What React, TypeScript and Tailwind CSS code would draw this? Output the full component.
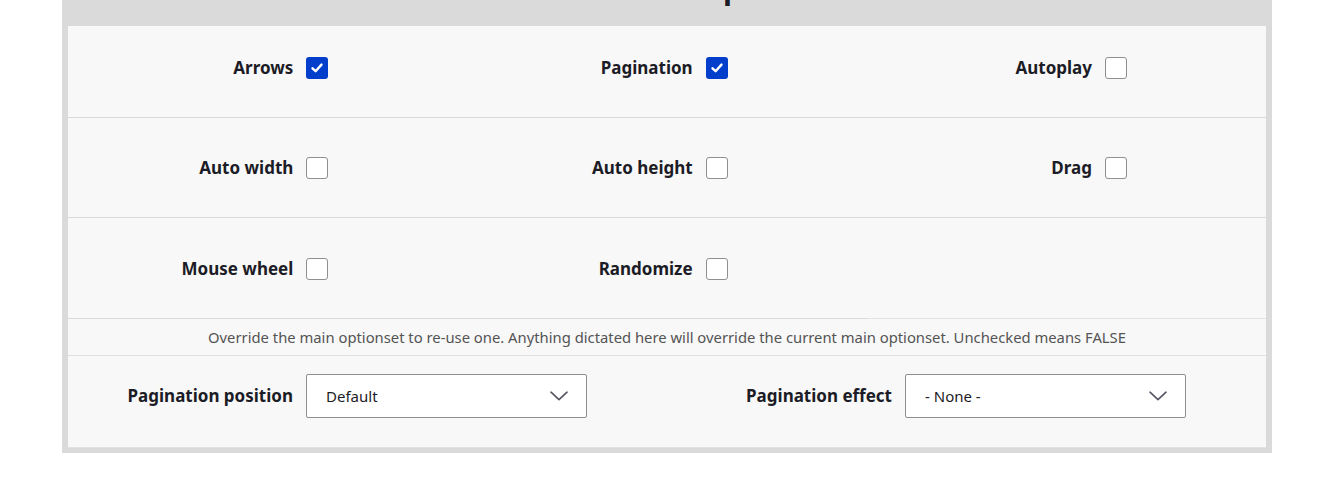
import React from 'react';

const font = { fontFamily: '"Noto Sans", "Open Sans", Arial, sans-serif' };

function Box({ checked }: { checked?: boolean }) {
    if (checked) {
        return (
            <span className="w-[22px] h-[22px] rounded-[3px] bg-[#003ecb] flex items-center justify-center shrink-0">
                <svg width="14" height="14" viewBox="0 0 14 14" fill="none">
                    <path d="M2.5 7.3 L5.6 10.2 L11.5 3.6" stroke="white" strokeWidth="2.4" strokeLinecap="round" strokeLinejoin="round" />
                </svg>
            </span>
        );
    }
    return <span className="w-[22px] h-[22px] rounded-[3px] bg-white border border-[#8e8e93] shrink-0" />;
}

function Cell({ label, checked, row }: { label?: string; checked?: boolean; row: number }) {
    const h = row === 1 ? 'h-[92px] pb-[7px]' : row === 2 ? 'h-[100px]' : 'h-[101px] pt-[1px]';
    return (
        <div
            className={`flex items-center justify-end gap-[13px] pr-[139px] border-b ${h} ${
                row === 3 && !label ? 'border-[#e3e3e8]' : 'border-[#d9d9d9]'
            }`}
        >
            {label && (
                <>
                    <span className="text-[17px] font-bold text-[#1c1c26]">{label}</span>
                    <Box checked={checked} />
                </>
            )}
        </div>
    );
}

function Select({ label, value }: { label: string; value: string }) {
    return (
        <div className="flex items-start justify-end gap-[13px] pr-[80px] pt-[18px] pb-[29px]">
            <span className="text-[17px] font-bold text-[#1c1c26] h-[44px] flex items-center">{label}</span>
            <div className="w-[281px] h-[44px] bg-white border border-[#8e8e93] rounded-[2px] flex items-center justify-between pl-[19px] pr-[18px]">
                <span className="text-[15px] text-[#1c1c26]">{value}</span>
                <svg width="18" height="10" viewBox="0 0 18 10" fill="none">
                    <path d="M1 1.2 L9 8.6 L17 1.2" stroke="#545560" strokeWidth="1.6" strokeLinecap="round" strokeLinejoin="round" />
                </svg>
            </div>
        </div>
    );
}

export default function App() {
    return (
        <div className="w-[1340px] h-[504px] bg-white" style={font}>
            <div className="ml-[62px] w-[1210px] bg-[#dadada] px-[6px] pb-[5px]">
                <div className="h-[26px] overflow-hidden pl-[655px]">
                    <span className="block text-[30px] font-bold leading-none mt-[-27px] text-[#1c1c26]">p</span>
                </div>
                <div className="bg-[#f8f8f8]">
                    <div className="grid grid-cols-3">
                        <Cell label="Arrows" checked row={1} />
                        <Cell label="Pagination" checked row={1} />
                        <Cell label="Autoplay" row={1} />
                        <Cell label="Auto width" row={2} />
                        <Cell label="Auto height" row={2} />
                        <Cell label="Drag" row={2} />
                        <Cell label="Mouse wheel" row={3} />
                        <Cell label="Randomize" row={3} />
                        <Cell row={3} />
                    </div>
                    <div className="h-[37px] flex items-center justify-center border-b border-[#dfe0e6] text-[14.8px] text-[#545454]">
                        Override the main optionset to re-use one. Anything dictated here will override the current main optionset. Unchecked means FALSE
                    </div>
                    <div className="grid grid-cols-2 border-b border-[#e3e3e3]">
                        <Select label="Pagination position" value="Default" />
                        <Select label="Pagination effect" value="- None -" />
                    </div>
                </div>
            </div>
        </div>
    );
}
